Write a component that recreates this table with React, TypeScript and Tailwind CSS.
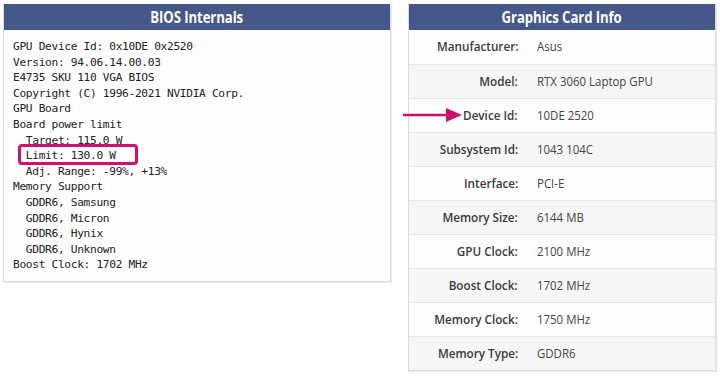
import React from "react";

const biosLines: { text: string; indent?: boolean; mark?: boolean }[] = [
  { text: "GPU Device Id: 0x10DE 0x2520" },
  { text: "Version: 94.06.14.00.03" },
  { text: "E4735 SKU 110 VGA BIOS" },
  { text: "Copyright (C) 1996-2021 NVIDIA Corp." },
  { text: "GPU Board" },
  { text: "Board power limit" },
  { text: "Target: 115.0 W", indent: true },
  { text: "Limit: 130.0 W", indent: true, mark: true },
  { text: "Adj. Range: -99%, +13%", indent: true },
  { text: "Memory Support" },
  { text: "GDDR6, Samsung", indent: true },
  { text: "GDDR6, Micron", indent: true },
  { text: "GDDR6, Hynix", indent: true },
  { text: "GDDR6, Unknown", indent: true },
  { text: "Boost Clock: 1702 MHz" },
];

const cardRows: [string, string][] = [
  ["Manufacturer:", "Asus"],
  ["Model:", "RTX 3060 Laptop GPU"],
  ["Device Id:", "10DE 2520"],
  ["Subsystem Id:", "1043 104C"],
  ["Interface:", "PCI-E"],
  ["Memory Size:", "6144 MB"],
  ["GPU Clock:", "2100 MHz"],
  ["Boost Clock:", "1702 MHz"],
  ["Memory Clock:", "1750 MHz"],
  ["Memory Type:", "GDDR6"],
];

const sans = "font-['Open_Sans','Noto_Sans',sans-serif]";

function Header({ title }: { title: string }) {
  return (
    <div
      className={`h-[26px] bg-[#46588a] text-white text-[15.5px] font-bold leading-[26px] text-center ${sans}`}
    >
      {/* the source font is narrower than Open Sans, squeeze it a bit */}
      <span className="inline-block scale-x-[0.85] tracking-[-0.1px]">{title}</span>
    </div>
  );
}

export default function App() {
  return (
    <div className="relative w-[720px] h-[380px] bg-white flex items-start gap-[17px] pt-[4px] pl-[3px]">
      {/* BIOS panel */}
      <div className="w-[388px] border border-[#dcdcdc] border-t-0 shadow-[1px_1px_1px_rgba(0,0,0,0.08)] bg-[#fdfdfd]">
        <Header title="BIOS Internals" />
        <div className="pt-[9px] pb-[8px] pl-[9px] font-['DejaVu_Sans_Mono','Liberation_Mono',monospace] text-[11.2px] tracking-[-0.32px] leading-[15.6px] text-[#222] whitespace-pre">
          {biosLines.map((l) => (
            <div key={l.text} className="relative">
              {l.indent ? "  " : ""}
              {l.text}
              {l.mark && (
                <span className="absolute left-[5px] top-[-4px] w-[120px] h-[21px] border-[3px] border-[#cf0e6e] rounded-[4px]" />
              )}
            </div>
          ))}
        </div>
      </div>

      {/* Graphics card panel */}
      <div className="w-[308px] border border-[#dcdcdc] border-t-0 shadow-[1px_1px_1px_rgba(0,0,0,0.08)]">
        <Header title="Graphics Card Info" />
        {cardRows.map(([label, value], i) => (
          <div
            key={label}
            className={`flex h-[34px] items-center text-[13px] ${sans} ${
              i % 2 === 1 ? "bg-[#f6f6f6]" : "bg-[#fdfdfd]"
            } ${i > 0 ? "border-t border-[#e6e6e6]" : ""}`}
          >
            <div className="w-[119px] pr-[10px] text-right">
              <span className="inline-block origin-right scale-x-[0.9] font-semibold text-[#3a3a3a]">{label}</span>
            </div>
            <div className="pl-[9px]">
              <span className="inline-block origin-left scale-x-[0.88] text-[#444]">{value}</span>
            </div>
          </div>
        ))}
      </div>

      {/* arrow pointing at Device Id */}
      <svg className="absolute left-[402px] top-[107px]" width="62" height="16" viewBox="0 0 62 16">
        <line x1="1" y1="8" x2="48" y2="8" stroke="#cf0e6e" strokeWidth="2.5" />
        <polygon points="44,1 60,8 44,15" fill="#cf0e6e" />
      </svg>
    </div>
  );
}
